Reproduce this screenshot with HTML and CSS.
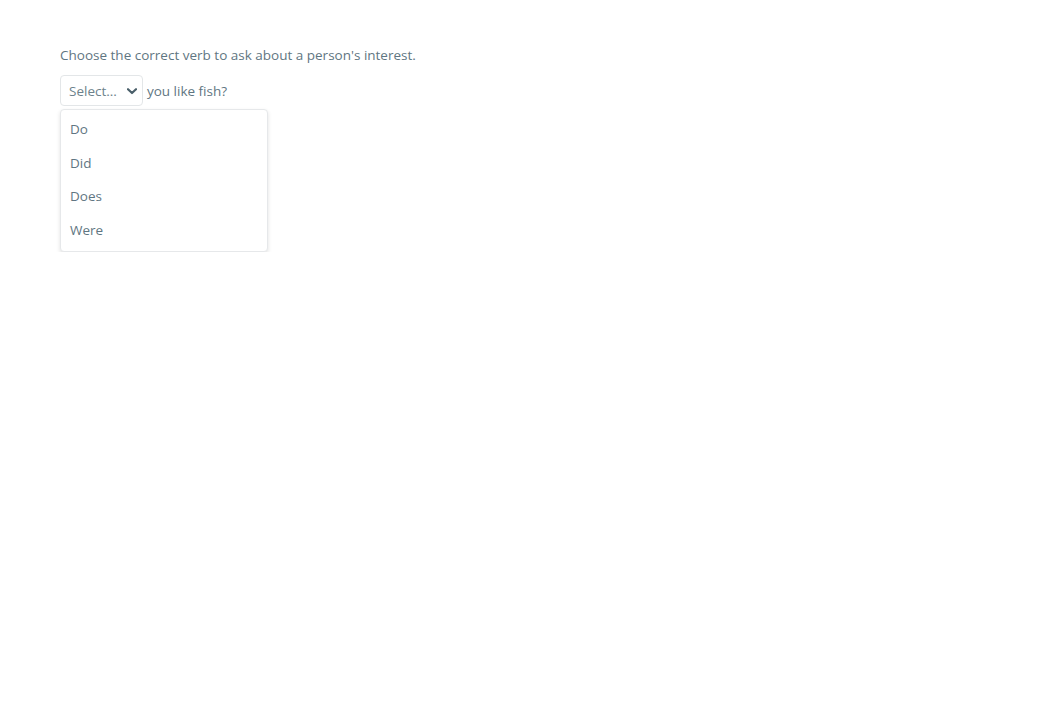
FILE: index.html
```html
<!DOCTYPE html>
<html lang="en">
<head>
<meta charset="utf-8">
<title>Quiz</title>
<link rel="stylesheet" href="styles.css">
</head>
<body>
<main class="quiz">
  <p class="prompt">Choose the correct verb to ask about a person's interest.</p>
  <div class="question">
    <button class="select" type="button">
      <span class="select-label">Select...</span>
      <svg class="chevron" width="10" height="7" viewBox="0 0 10 7" aria-hidden="true"><path d="M1 1.2 L5 5 L9 1.2" fill="none" stroke="currentColor" stroke-width="2.2" stroke-linecap="round" stroke-linejoin="round"/></svg>
    </button>
    <span class="rest">you like fish?</span>
  </div>
  <ul class="menu">
    <li class="option">Do</li>
    <li class="option">Did</li>
    <li class="option">Does</li>
    <li class="option">Were</li>
  </ul>
</main>
</body>
</html>
```

FILE: styles.css
```css
html, body {
  margin: 0;
  padding: 0;
  background: #ffffff;
}

body {
  font-family: "Open Sans", "Noto Sans", sans-serif;
  font-size: 13.5px;
  color: #5f7682;
}

.quiz {
  padding: 45px 60px 0;
}

.prompt {
  margin: 0;
  line-height: 20px;
}

.question {
  margin-top: 10px;
  display: flex;
  align-items: center;
  gap: 4px;
}

.select {
  display: flex;
  align-items: center;
  gap: 10px;
  height: 31px;
  box-sizing: border-box;
  padding: 0 5px 0 8px;
  border: 1px solid #e3e6e8;
  border-radius: 4px;
  background: #fff;
  font: inherit;
  color: #6d828c;
}

.chevron {
  color: #4a5f6a;
  margin-top: 2px;
}

.menu {
  width: 208px;
  box-sizing: border-box;
  margin: 3px 0 0;
  padding: 3px 0;
  list-style: none;
  background: #fff;
  border: 1px solid #e6e8ea;
  border-radius: 4px;
  box-shadow: 0 2px 4px rgba(0, 0, 0, 0.12);
}

.option {
  padding: 0 9px;
  line-height: 33.7px;
}

.rest {
  line-height: 20px;
}
```
